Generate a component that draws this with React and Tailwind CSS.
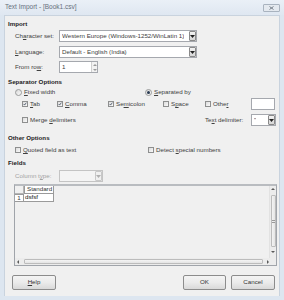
import React from "react";

const U = ({ children }) => <span className="underline underline-offset-[1px] decoration-[0.5px]">{children}</span>;

function Arrow({ disabled }) {
  return (
    <div
      className={`w-[7px] h-[10px] flex items-center justify-center border rounded-[1px] ${
        disabled ? "border-[#c8c8c8] bg-[#f0f0f0]" : "border-[#8a8a8a] bg-gradient-to-b from-[#f3f3f3] to-[#d6d6d6]"
      }`}
    >
      <svg width="5" height="3" viewBox="0 0 5 3">
        <path d="M0 0 L5 0 L2.5 3 Z" fill={disabled ? "#b0b0b0" : "#202020"} />
      </svg>
    </div>
  );
}

function Select({ w, text, disabled }) {
  return (
    <div
      className={`h-[12px] flex items-center justify-between border pl-[2px] ${w} ${
        disabled ? "border-[#c4c4c4] bg-[#f4f4f4]" : "border-[#a5a8ae] bg-white"
      }`}
    >
      <span className="truncate">{text}</span>
      <Arrow disabled={disabled} />
    </div>
  );
}

function Check({ checked }) {
  return (
    <div className="w-[6px] h-[6px] border border-[#8e8f8f] bg-gradient-to-br from-[#dcdcdc] to-[#fafafa] flex items-center justify-center shrink-0">
      {checked && (
        <svg width="6" height="6" viewBox="0 0 6 6">
          <path d="M1 3 L2.4 4.6 L5 1" stroke="#2f3d54" strokeWidth="1.1" fill="none" />
        </svg>
      )}
    </div>
  );
}

function Radio({ checked }) {
  return (
    <div className="w-[7px] h-[7px] rounded-full border border-[#9a9b9b] bg-gradient-to-br from-[#d8d8d8] to-[#fafafa] flex items-center justify-center shrink-0">
      {checked && <div className="w-[3px] h-[3px] rounded-full bg-[#2a3b52]" />}
    </div>
  );
}

function Item({ w, checked, radio, children }) {
  return (
    <div className={`flex items-center gap-[2px] ${w}`}>
      {radio ? <Radio checked={checked} /> : <Check checked={checked} />}
      <span>{children}</span>
    </div>
  );
}

function Button({ w, children }) {
  return (
    <div
      className={`h-[15px] ${w} border border-[#8c8c8c] rounded-[2px] bg-gradient-to-b from-[#f4f4f4] via-[#ebebeb] to-[#d9d9d9] flex items-center justify-center text-[#333]`}
    >
      {children}
    </div>
  );
}

export default function App() {
  return (
    <div
      className="w-[284px] h-[300px] bg-[#dde6f0] flex flex-col text-[6.2px] leading-none text-[#404040] overflow-hidden"
      style={{ fontFamily: '"Liberation Sans", Arial, sans-serif' }}
    >
      {/* Title bar */}
      <div className="h-[15px] flex items-center justify-between pl-[5px] pr-[4px] bg-gradient-to-b from-[#eaf0f7] to-[#dfe7f1]">
        <span className="text-[6.5px] text-[#66707c]">Text Import - [Book1.csv]</span>
        <div className="w-[17px] h-[8px] border border-[#a9b3bf] rounded-[1px] bg-[#e4e9ef] flex items-center justify-center">
          <svg width="5" height="4" viewBox="0 0 5 4">
            <path d="M0.5 0.5 L4.5 3.5 M4.5 0.5 L0.5 3.5" stroke="#6b7480" strokeWidth="0.9" />
          </svg>
        </div>
      </div>

      {/* Body */}
      <div className="ml-[4px] mr-[4px] h-[281px] bg-[#f0f0f0] border-l border-t border-r border-[#c9d3de] flex flex-col pl-[3px] pt-[3px]">
        <div className="h-[10px] flex items-center font-bold text-[#222]">Import</div>

        <div className="mt-[1px] flex items-center">
          <span className="w-[44px] pl-[7px] shrink-0 box-content">Ch<U>a</U>racter set:</span>
          <Select w="w-[138px]" text="Western Europe (Windows-1252/WinLatin 1)" />
        </div>
        <div className="mt-[4px] flex items-center">
          <span className="w-[44px] pl-[7px] shrink-0 box-content"><U>L</U>anguage:</span>
          <Select w="w-[138px]" text="Default - English (India)" />
        </div>
        <div className="mt-[3px] flex items-center">
          <span className="w-[44px] pl-[7px] shrink-0 box-content">From ro<U>w</U>:</span>
          <div className="h-[12px] w-[39px] border border-[#a5a8ae] bg-white flex items-center justify-between pl-[2px]">
            <span>1</span>
            <div className="w-[6px] h-[10px] flex flex-col items-center justify-around border-l border-[#d0d0d0] bg-[#f2f2f2]">
              <svg width="4" height="2" viewBox="0 0 4 2"><path d="M0 2 L4 2 L2 0 Z" fill="#9a9a9a" /></svg>
              <svg width="4" height="2" viewBox="0 0 4 2"><path d="M0 0 L4 0 L2 2 Z" fill="#9a9a9a" /></svg>
            </div>
          </div>
        </div>

        <div className="mt-[4px] h-[10px] flex items-center font-bold text-[#222]">Separator Options</div>
        <div className="h-[10px] flex items-center pl-[7px]">
          <Item w="w-[130px]" radio>
            <U>F</U>ixed width
          </Item>
          <Item radio checked>
            <U>S</U>eparated by
          </Item>
        </div>
        <div className="mt-[1px] h-[12px] flex items-center pl-[14px]">
          <Item w="w-[35px]" checked><U>T</U>ab</Item>
          <Item w="w-[51px]" checked><U>C</U>omma</Item>
          <Item w="w-[55px]" checked>Se<U>m</U>icolon</Item>
          <Item w="w-[42px]">S<U>p</U>ace</Item>
          <Item w="w-[46px]">Othe<U>r</U></Item>
          <div className="h-[12px] w-[24px] border border-[#a5a8ae] bg-white" />
        </div>
        <div className="mt-[4px] h-[12px] flex items-center pl-[14px]">
          <Item w="w-[183px]">Merge <U>d</U>elimiters</Item>
          <span className="w-[46px]">Te<U>x</U>t delimiter:</span>
          <Select w="w-[25px]" text={'"'} />
        </div>

        <div className="mt-[7px] h-[10px] flex items-center font-bold text-[#222]">Other Options</div>
        <div className="mt-[2px] h-[10px] flex items-center pl-[7px]">
          <Item w="w-[133px]"><U>Q</U>uoted field as text</Item>
          <Item>Detect <U>s</U>pecial numbers</Item>
        </div>

        <div className="mt-[3px] h-[10px] flex items-center font-bold text-[#222]">Fields</div>
        <div className="mt-[2px] flex items-center">
          <span className="w-[44px] pl-[7px] shrink-0 box-content text-[#a3a3a3]">Column t<U>y</U>pe:</span>
          <Select w="w-[44px]" text="" disabled />
        </div>

        {/* Table */}
        <div className="mt-[2px] ml-[6px] mr-[2px] h-[82px] border border-[#a0a4aa] border-t-[2px] border-t-[#b9bcc0] flex flex-col">
          <div className="flex-1 flex">
            <div className="flex-1">
              <div className="flex">
                <div className="w-[9px] h-[8px] border-r border-b border-[#b5b5b5]" />
                <div className="w-[30px] h-[8px] border border-t-0 border-[#9a9a9a] bg-white flex items-center pl-[2px] text-[#333]">
                  Standard
                </div>
              </div>
              <div className="flex">
                <div className="w-[9px] h-[8px] border border-l-0 border-[#9a9a9a] bg-white flex items-center justify-center">1</div>
                <div className="w-[30px] h-[8px] border-r border-b border-[#9a9a9a] bg-white flex items-center pl-[1px] text-[#111]">
                  dsfsf
                </div>
              </div>
            </div>
            {/* vertical scrollbar */}
            <div className="w-[7px] flex flex-col items-center bg-[#ececec] border-l border-[#e2e2e2]">
              <svg className="mt-[2px]" width="4" height="2" viewBox="0 0 4 2"><path d="M0 2 L4 2 L2 0 Z" fill="#5a5a5a" /></svg>
              <div className="mt-[5px] w-[5px] h-[52px] border border-[#bcbcbc] rounded-[1px] bg-gradient-to-r from-[#f4f4f4] to-[#e4e4e4] flex items-center justify-center">
                <div className="w-[3px] h-[3px] border-y border-[#999]" />
              </div>
              <svg className="mt-[4px]" width="4" height="2" viewBox="0 0 4 2"><path d="M0 0 L4 0 L2 2 Z" fill="#5a5a5a" /></svg>
            </div>
          </div>
          {/* horizontal scrollbar */}
          <div className="h-[7px] flex items-center bg-[#ececec] pr-[7px]">
            <svg className="ml-[2px]" width="2" height="4" viewBox="0 0 2 4"><path d="M2 0 L2 4 L0 2 Z" fill="#5a5a5a" /></svg>
            <div className="ml-[5px] flex-1 h-[5px] border border-[#bcbcbc] rounded-[1px] bg-gradient-to-b from-[#f4f4f4] to-[#e4e4e4]" />
            <svg className="ml-[4px]" width="2" height="4" viewBox="0 0 2 4"><path d="M0 0 L0 4 L2 2 Z" fill="#5a5a5a" /></svg>
          </div>
        </div>

        {/* Buttons */}
        <div className="mt-[9px] flex items-center pl-[4px] pr-[4px]">
          <Button w="w-[44px]"><U>H</U>elp</Button>
          <div className="flex-1" />
          <Button w="w-[43px]">OK</Button>
          <div className="w-[5px]" />
          <Button w="w-[44px]">Cancel</Button>
        </div>
      </div>
    </div>
  );
}
